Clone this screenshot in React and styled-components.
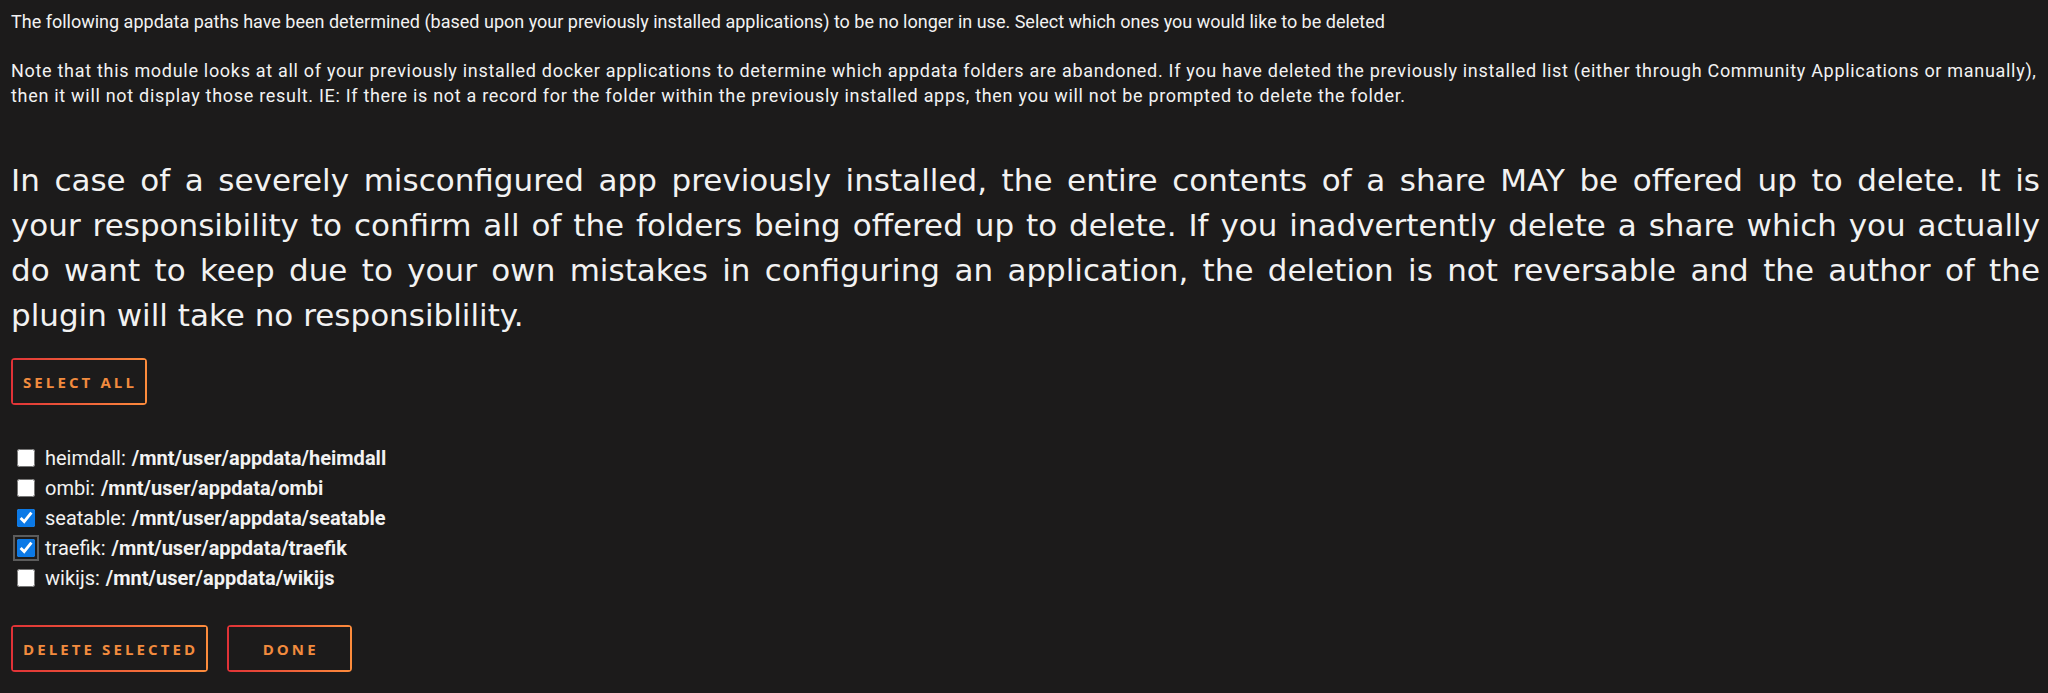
import React from "react";
import styled, { createGlobalStyle } from "styled-components";

const Global = createGlobalStyle`
  html, body { margin: 0; padding: 0; background: #1c1b1b; }
  body { color: #f2f2f2; font-family: Roboto, "Liberation Sans", sans-serif; }
`;

const Page = styled.div`
  box-sizing: border-box;
  width: 2048px;
  min-height: 693px;
  padding: 9px 8px 0 11px;
  background: #1c1b1b;
  display: flex;
  flex-direction: column;
`;

const Note = styled.p`
  margin: 0 0 ${(p) => p.$gap || 0}px;
  font-size: 18px;
  line-height: 25px;
  letter-spacing: ${(p) => p.$track || 0}px;
  color: #f2f2f2;
`;

const Warning = styled.div`
  margin: 0;
  font-family: "DejaVu Sans", Verdana, sans-serif;
  font-size: 31px;
  line-height: 45px;
  color: #f2f2f2;
`;

const WarnLine = styled.span`
  display: block;
  white-space: nowrap;
  text-align: justify;
  text-align-last: ${(p) => (p.$last ? "left" : "justify")};
`;

const Button = styled.button`
  box-sizing: border-box;
  height: 47px;
  min-width: ${(p) => p.$min || 0}px;
  padding: 0 10px 0 12px;
  border: 0;
  border-radius: 4px;
  font-family: "Open Sans", Roboto, sans-serif;
  font-weight: 700;
  font-size: 15px;
  letter-spacing: 3.1px;
  text-transform: uppercase;
  color: #f28b3e;
  cursor: pointer;
  background:
    linear-gradient(90deg, #e03237, #fd8c3c) 0 0 / 100% 2px no-repeat,
    linear-gradient(90deg, #e03237, #fd8c3c) 0 100% / 100% 2px no-repeat,
    linear-gradient(#e03237, #e03237) 0 0 / 2px 100% no-repeat,
    linear-gradient(#fd8c3c, #fd8c3c) 100% 0 / 2px 100% no-repeat,
    #1c1b1b;
`;

const SelectRow = styled.div`
  display: flex;
  margin-top: 20px;
`;

const List = styled.div`
  display: flex;
  flex-direction: column;
  margin-top: 38px;
`;

const Row = styled.label`
  display: flex;
  align-items: center;
  height: 30px;
  font-size: 20px;
  color: #f2f2f2;
`;

const Box = styled.input`
  width: 18px;
  height: 18px;
  margin: 0 10px 0 6px;
  accent-color: #0b79e6;
  border-radius: 3px;
  outline: ${(p) => (p.$focused ? "2px solid #5c5c5c" : "none")};
  outline-offset: 2px;
`;

const Path = styled.b`
  font-weight: 700;
  margin-left: 6px;
`;

const Actions = styled.div`
  display: flex;
  gap: 19px;
  margin-top: 32px;
`;

const items = [
  { name: "heimdall", checked: false },
  { name: "ombi", checked: false },
  { name: "seatable", checked: true },
  { name: "traefik", checked: true, focused: true },
  { name: "wikijs", checked: false },
];

const warning = [
  "In case of a severely misconfigured app previously installed, the entire contents of a share MAY be offered up to delete. It is",
  "your responsibility to confirm all of the folders being offered up to delete. If you inadvertently delete a share which you actually",
  "do want to keep due to your own mistakes in configuring an application, the deletion is not reversable and the author of the",
  "plugin will take no responsiblility.",
];

export default function App() {
  return (
    <>
      <Global />
      <Page>
        <Note $gap={24}>
          The following appdata paths have been determined (based upon your previously installed applications) to be no longer in use. Select which ones you would like to be deleted
        </Note>
        <Note $gap={50} $track={0.7}>
          Note that this module looks at all of your previously installed docker applications to determine which appdata folders are abandoned. If you have deleted the previously installed list (either through Community Applications or manually), then it will not display those result. IE: If there is not a record for the folder within the previously installed apps, then you will not be prompted to delete the folder.
        </Note>
        <Warning>
          {warning.map((line, i) => (
            <WarnLine key={i} $last={i === warning.length - 1}>
              {line}
            </WarnLine>
          ))}
        </Warning>
        <SelectRow>
          <Button>Select All</Button>
        </SelectRow>
        <List>
          {items.map((it) => (
            <Row key={it.name}>
              <Box type="checkbox" defaultChecked={it.checked} $focused={it.focused} />
              {it.name}:<Path>/mnt/user/appdata/{it.name}</Path>
            </Row>
          ))}
        </List>
        <Actions>
          <Button>Delete Selected</Button>
          <Button $min={125}>Done</Button>
        </Actions>
      </Page>
    </>
  );
}
